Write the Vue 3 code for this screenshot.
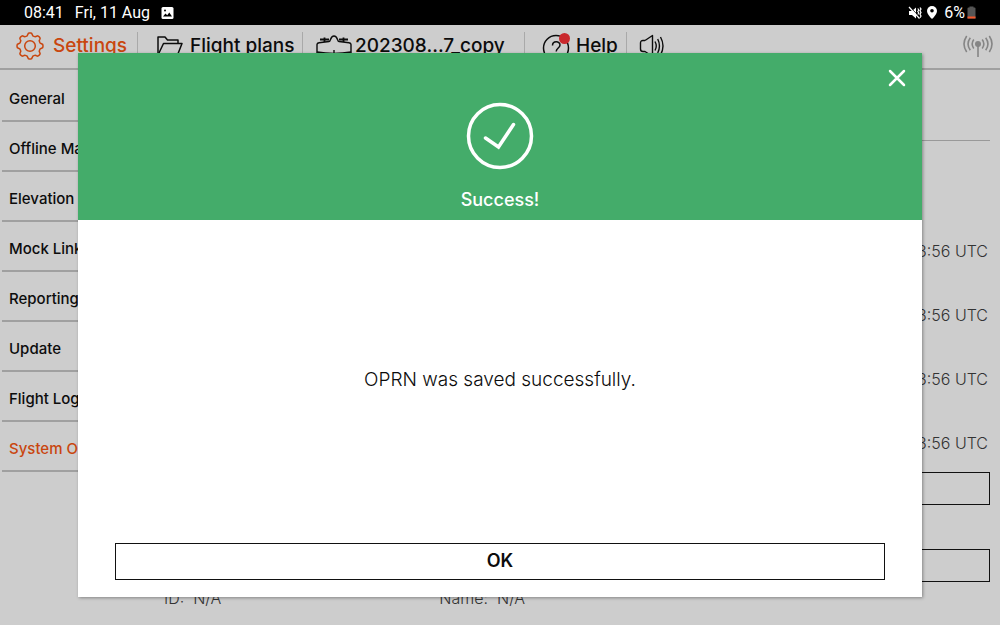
<script setup>
const menu = [
  { label: 'General' },
  { label: 'Offline Maps' },
  { label: 'Elevation' },
  { label: 'Mock Link' },
  { label: 'Reporting' },
  { label: 'Update' },
  { label: 'Flight Logs' },
  { label: 'System Operator', active: true },
]

const times = ['08:33:56 UTC', '08:33:56 UTC', '08:33:56 UTC', '08:33:56 UTC']

// Outline of an eight-toothed gear around the centre (14, 14)
const gear = Array.from({ length: 96 }, (_, i) => {
  const a = (i / 96) * Math.PI * 2
  const r = 11.7 + 1.3 * Math.tanh(2.2 * Math.cos(8 * a))
  const x = (14 + r * Math.sin(a)).toFixed(2)
  const y = (14 - r * Math.cos(a)).toFixed(2)
  return `${i ? 'L' : 'M'}${x} ${y}`
}).join('') + 'Z'
</script>

<template>
  <div class="app">
    <div class="status">
      <span>08:41</span>
      <span>Fri, 11 Aug</span>
      <svg class="picture" width="13" height="12" viewBox="0 0 13 12">
        <rect x="0.5" y="0" width="12" height="12" rx="1.5" fill="#fff" />
        <path d="M2 9.5 4.5 6.5 6.2 8.3 8.3 5.5 11 9.5Z" fill="#000" />
        <circle cx="4" cy="3.5" r="1" fill="#000" />
      </svg>
      <div class="status-right">
        <svg width="14" height="14" viewBox="0 0 14 14">
          <path d="M1 5H4L8 1.5V12.500L4 9H1Z" fill="#fff" />
          <path d="M1.500 0.500 11 10.500" stroke="#000" stroke-width="1" />
          <path d="M1 1 11.500 12.500" stroke="#fff" stroke-width="1.200" />
          <path d="M9.800 2.500 10.800 4 9.800 5.500 10.800 7 9.800 8.500M12 1.500 13 3 12 4.700 13 6.400 12 8.200 13 10 12 11.800" stroke="#fff" fill="none" stroke-width="1.200" />
        </svg>
        <svg class="pin" width="10" height="13" viewBox="0 0 10 13">
          <path d="M5 0A5 5 0 0 0 0 5C0 8.500 5 13 5 13S10 8.500 10 5A5 5 0 0 0 5 0Z" fill="#fff" />
          <circle cx="5" cy="4.800" r="1.800" fill="#000" />
        </svg>
        <span>6%</span>
        <svg width="9" height="13" viewBox="0 0 9 13">
          <path d="M0.500 2.500Q0.500 1.500 1.500 1.500H2.500V0.500H6.500V1.500H7.500Q8.500 1.500 8.500 2.500V12.500H0.500Z" fill="#555" />
          <path d="M0.500 10.500H8.500V12.500H0.500Z" fill="#f4572b" />
        </svg>
      </div>
    </div>

    <nav class="toolbar">
      <button class="tab settings">
        <svg width="28" height="28" viewBox="0 0 28 28" fill="none" stroke="currentColor" stroke-width="1.500">
          <path :d="gear" />
          <circle cx="14" cy="14" r="5.300" />
        </svg>
        Settings
      </button>
      <button class="tab plans">
        <svg width="26" height="22" viewBox="0 0 26 22" fill="none" stroke="currentColor" stroke-width="1.500" stroke-linejoin="round">
          <path d="M1 20V2H8L10.500 5H21V8" />
          <path d="M1 20 6.500 8.500H25L20.500 20Z" />
        </svg>
        Flight plans
      </button>
      <button class="tab file">
        <svg width="36" height="24" viewBox="0 0 36 24" fill="none" stroke="currentColor" stroke-width="1.400">
          <path d="M1 20V10.500Q1 9 3 8.700L13 7.500C15 7.500 14 2 18 2S21 7.500 23 7.500L33 8.700Q35 9 35 10.500V20" />
          <path d="M4 5.500H13M23 5.500H32M8.500 3.500V8M27.500 3.500V8" stroke-width="1.800" />
          <path d="M1 18Q18 21 35 18M18 16V23" />
        </svg>
        202308...7_copy
      </button>
      <button class="tab help">
        <svg width="30" height="30" viewBox="0 0 30 30" fill="none" stroke="currentColor" stroke-width="1.500">
          <circle cx="14" cy="17" r="12.500" />
          <path d="M10.500 14.500C10.500 9.500 18 9.700 18 14C18 17 14.200 17 14.200 20.500M14.200 22.500V24" />
          <circle cx="22.500" cy="7.500" r="5.500" fill="#c9282d" stroke="none" />
        </svg>
        Help
      </button>
      <button class="tab sound" aria-label="Sound">
        <svg width="26" height="24" viewBox="0 0 26 24" fill="none" stroke="currentColor" stroke-width="1.400" stroke-linejoin="round">
          <path d="M6 6.500H4Q1.500 6.500 1.500 9V15Q1.500 17.500 4 17.500H6L13.500 22.500V1.500L6 6.500" />
          <path d="M16 7.500Q18.500 12 16 16.500M18.700 5Q22.200 12 18.700 19M21.500 3Q26.500 12 21.500 21" />
        </svg>
      </button>
      <svg class="signal" width="30" height="24" viewBox="0 0 30 24" fill="none" stroke="#858585" stroke-width="1.600">
        <circle cx="15" cy="9" r="3" fill="#858585" stroke="none" />
        <path d="M15 10V22" />
        <path d="M10.800 4.500Q7.500 9 10.800 13.500M7.300 2.700Q2.800 9 7.300 15.300M3.700 1Q-1.700 9 3.700 17M19.200 4.500Q22.500 9 19.200 13.500M22.700 2.700Q27.200 9 22.700 15.300M26.300 1Q31.700 9 26.300 17" />
      </svg>
    </nav>

    <div class="body">
      <aside class="side">
        <a v-for="m in menu" :key="m.label" href="#" :class="{ active: m.active }">{{ m.label }}</a>
      </aside>
      <main class="content">
        <hr />
        <div v-for="(t, i) in times" :key="i" class="time">{{ t }}</div>
        <button class="outline" aria-label="Edit"></button>
        <button class="outline" aria-label="Save"></button>
        <div class="ids">
          <span>ID:&nbsp; N/A</span>
          <span>Name:&nbsp; N/A</span>
        </div>
      </main>
    </div>

    <div class="overlay">
      <section class="dialog" role="dialog" aria-labelledby="dialog-title">
        <header>
          <button class="close" aria-label="Close">
            <svg width="18" height="18" viewBox="0 0 18 18" stroke="#fff" stroke-width="2.500" stroke-linecap="round">
              <path d="M2 2 16 16M16 2 2 16" />
            </svg>
          </button>
          <svg width="68" height="68" viewBox="0 0 68 68" fill="none" stroke="#fff">
            <circle cx="34" cy="34" r="31.500" stroke-width="3.500" />
            <path d="M19.500 36 32.500 45 47.500 22.500" stroke-width="3.500" stroke-linecap="round" />
          </svg>
          <h2 id="dialog-title">Success!</h2>
        </header>
        <p>OPRN was saved successfully.</p>
        <button class="ok">OK</button>
      </section>
    </div>
  </div>
</template>

<style>
body {
  margin: 0;
  background: #cdcdcd;
}
</style>

<style scoped>
.app {
  position: relative;
  display: flex;
  flex-direction: column;
  height: 100vh;
  overflow: hidden;
  background: #cdcdcd;
  color: #0c0c0c;
  font-family: Inter, "Liberation Sans", sans-serif;
}
button {
  padding: 0;
  border: 0;
  background: none;
  color: inherit;
  font: inherit;
}
svg {
  flex: none;
}
.status {
  display: flex;
  flex: none;
  align-items: center;
  gap: 11px;
  height: 25px;
  padding: 0 24px;
  background: #000;
  color: #fff;
  font-family: Roboto, sans-serif;
  font-size: 16px;
}
.status-right {
  display: flex;
  align-items: center;
  gap: 2px;
  margin-left: auto;
}
.pin {
  margin: 0 5px 0 3px;
}
.toolbar {
  display: flex;
  flex: none;
  box-sizing: border-box;
  height: 45px;
  padding-top: 7px;
  border-bottom: 2px solid #a0a0a0;
}
.tab {
  display: flex;
  align-items: center;
  box-sizing: border-box;
  padding-bottom: 9px;
  border-right: 1px solid #a9a9a9;
  font-size: 19px;
  font-weight: 500;
  line-height: 24px;
  white-space: nowrap;
}
.settings {
  width: 138px;
  padding-left: 16px;
  gap: 9px;
  color: #c9460f;
}
.plans {
  width: 165px;
  padding-left: 19px;
  gap: 7px;
}
.file {
  width: 222px;
  padding-left: 13px;
  gap: 3px;
}
.help {
  width: 102px;
  padding-left: 17px;
  gap: 4px;
}
.sound {
  width: 50px;
  padding-left: 12px;
  border-right: 0;
}
.signal {
  margin: 3px 7px 0 auto;
}
.body {
  display: flex;
  flex: 1;
  min-height: 0;
}
.side {
  width: 153px;
  flex: none;
  padding: 2px 0 0 2px;
}
.side a {
  display: block;
  box-sizing: border-box;
  height: 50px;
  padding: 3px 0 0 7px;
  border-bottom: 2px solid #a0a0a0;
  color: inherit;
  font-size: 15px;
  font-weight: 500;
  line-height: 48px;
  text-decoration: none;
  white-space: nowrap;
}
.side a.active {
  color: #c9460f;
}
.content {
  display: flex;
  flex: 1;
  flex-direction: column;
  padding: 70px 10px 0 9px;
  color: #333;
  font-size: 16px;
  font-weight: 300;
}
hr {
  width: 100%;
  margin: 0 0 78px;
  border: 0;
  border-top: 1px solid #999;
}
.time {
  flex: none;
  height: 64px;
  padding-right: 2px;
  line-height: 64px;
  text-align: right;
}
.outline {
  flex: none;
  height: 33px;
  margin-bottom: 44px;
  border: 1px solid #111;
}
.time + .outline {
  margin-top: -3px;
}
.ids {
  display: grid;
  grid-template-columns: 1fr 2fr;
  line-height: 20px;
  margin-top: -38px;
}
.overlay {
  position: absolute;
  inset: 0;
  display: flex;
  padding: 53px 78px 28px;
}
.dialog {
  display: flex;
  flex: 1;
  flex-direction: column;
  background: #fff;
  box-shadow: 1px 1px 3px rgba(0, 0, 0, 0.35);
}
.dialog header {
  position: relative;
  display: flex;
  flex-direction: column;
  align-items: center;
  box-sizing: border-box;
  height: 167px;
  padding-top: 49px;
  background: #44ac6a;
  color: #fff;
}
.close {
  position: absolute;
  top: 16px;
  right: 16px;
  line-height: 0;
}
h2 {
  margin: 18px 0 0;
  font-size: 18px;
  font-weight: 500;
  line-height: 24px;
}
p {
  display: flex;
  flex: 1;
  align-items: center;
  justify-content: center;
  margin: 0;
  padding-bottom: 4px;
  font-size: 19px;
  font-weight: 300;
}
.ok {
  height: 37px;
  margin: 0 37px 17px;
  padding-bottom: 2px;
  border: 1px solid #111;
  font-size: 18px;
  font-weight: 600;
}
</style>
